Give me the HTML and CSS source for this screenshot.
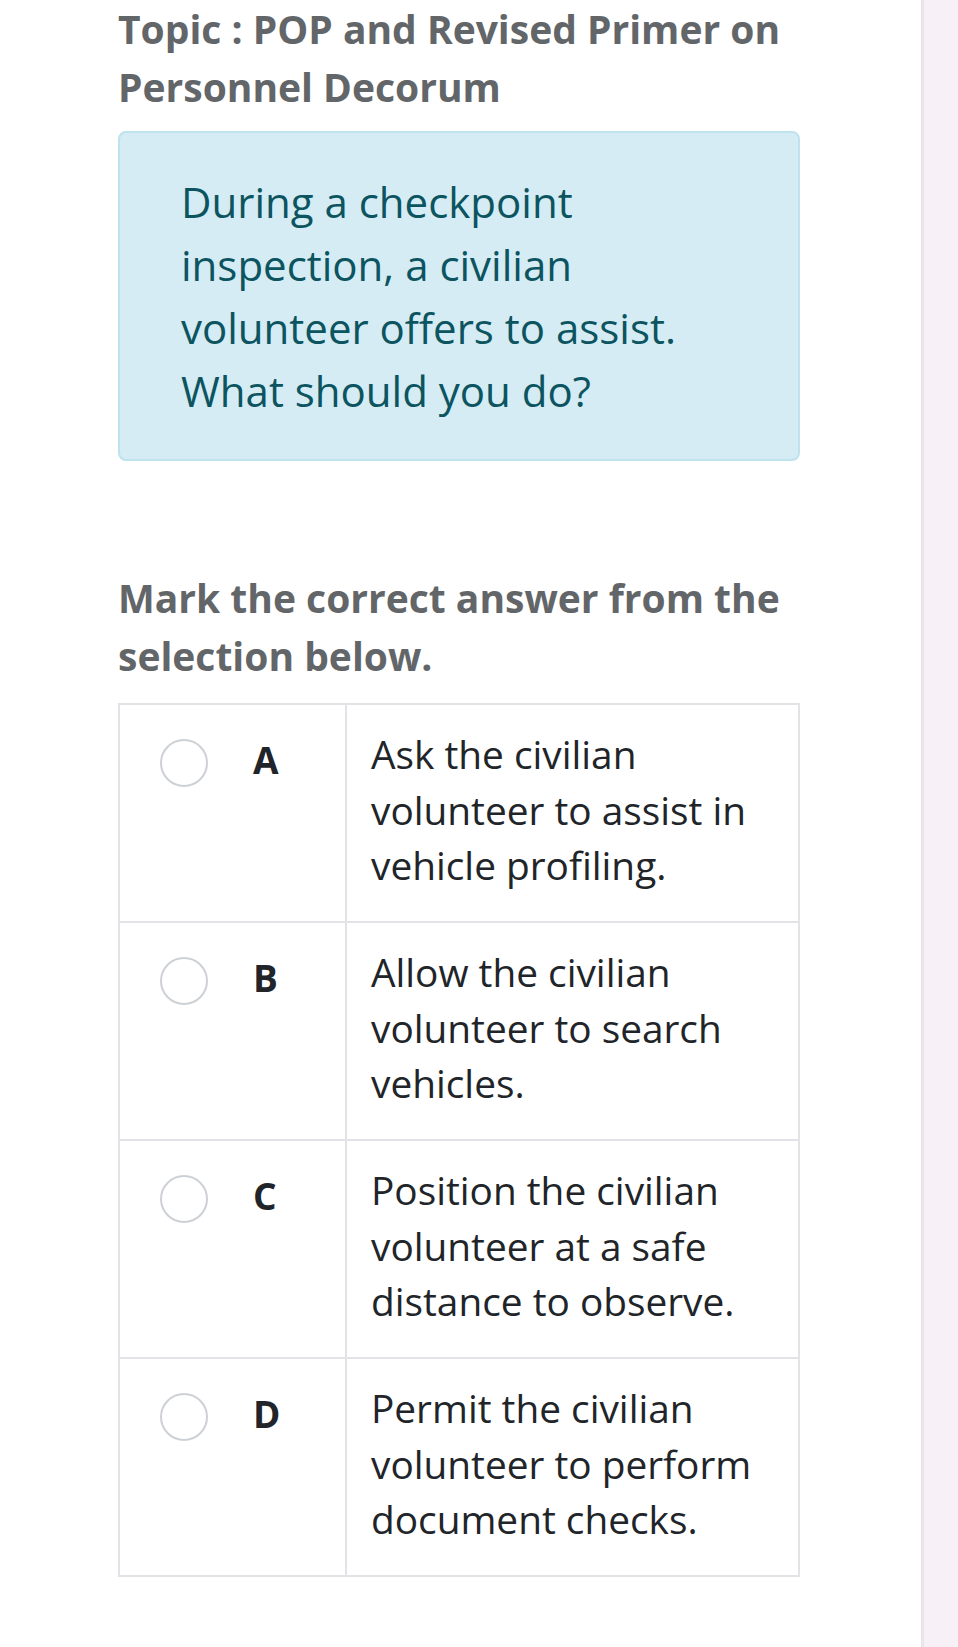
FILE: index.html
```html
<!DOCTYPE html>
<html lang='en'>
<head>
    <meta charset='UTF-8'>
    <meta name='viewport' content='width=device-width, initial-scale=1.0'>
    <title>Quiz</title>

    <link rel="stylesheet" href="styles.css">
</head>
<body>
    <div class='page'>
        <div class='main'>
            <h2 class='topic'>Topic : POP and Revised Primer on Personnel Decorum</h2>
            <div class='question'>
                During a checkpoint inspection, a civilian volunteer offers to assist. What should you do?
            </div>
            <h2 class='instruction'>Mark the correct answer from the selection below.</h2>
            <table class='choices'>
                <tr>
                    <td class='pick'><div class='pick-inner'><span class='radio'></span><span class='letter'>A</span></div></td>
                    <td class='answer'>Ask the civilian volunteer to assist in vehicle profiling.</td>
                </tr>
                <tr>
                    <td class='pick'><div class='pick-inner'><span class='radio'></span><span class='letter'>B</span></div></td>
                    <td class='answer'>Allow the civilian volunteer to search vehicles.</td>
                </tr>
                <tr>
                    <td class='pick'><div class='pick-inner'><span class='radio'></span><span class='letter'>C</span></div></td>
                    <td class='answer'>Position the civilian volunteer at a safe distance to observe.</td>
                </tr>
                <tr>
                    <td class='pick'><div class='pick-inner'><span class='radio'></span><span class='letter'>D</span></div></td>
                    <td class='answer'>Permit the civilian volunteer to perform document checks.</td>
                </tr>
            </table>
        </div>
        <div class='side'></div>
    </div>
</body>
</html>
```

FILE: styles.css
```css
*{
    margin: 0;
    box-sizing: border-box;
}
body{
    background-color: #ffffff;
    font-family: "Open Sans", "Liberation Sans", sans-serif;
    color: #212529;
}
.page{
    display: flex;
    min-height: 1647px;
}
.main{
    width: 921px;
    padding-left: 118px;
}
.side{
    flex: 1;
    background-color: #f7f1f7;
    border-left: 3px solid #e9e5eb;
}
.topic, .instruction{
    width: 682px;
    font-size: 39px;
    line-height: 58px;
    font-weight: 700;
    color: #636669;
}
.question{
    width: 682px;
    margin-top: 15px;
    padding: 37px 60px 37px 61px;
    background-color: #d5ecf4;
    border: 2px solid #bfe3ee;
    border-radius: 8px;
    color: #0c5460;
    font-size: 42px;
    line-height: 63px;
}
.instruction{
    margin-top: 108px;
}
.choices{
    margin-top: 18px;
    width: 682px;
    border-collapse: collapse;
    border: 2px solid #e1e3e6;
}
.choices td{
    border: 2px solid #e1e3e6;
    vertical-align: top;
    height: 218px;
}
.pick{
    width: 227px;
    padding: 29px 0 0 40px;
}
.pick-inner{
    display: flex;
    align-items: center;
    gap: 45px;
}
.radio{
    width: 48px;
    height: 48px;
    border: 2.5px solid #cdd1d6;
    border-radius: 50%;
}
.letter{
    font-weight: 700;
    font-size: 37px;
    margin-bottom: 6px;
    color: #212529;
}
.answer{
    padding: 22px 24px 24px 24px;
    font-size: 38.8px;
    line-height: 55.5px;
}
```
